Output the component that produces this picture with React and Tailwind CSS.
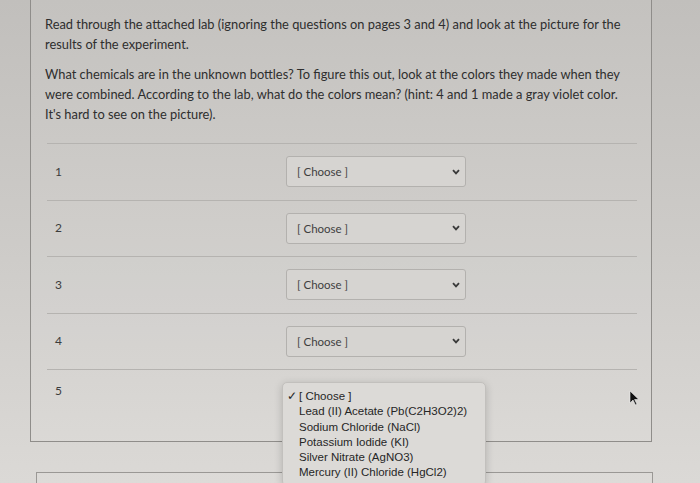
import React from "react";

const options = [
  "Lead (II) Acetate (Pb(C2H3O2)2)",
  "Sodium Chloride (NaCl)",
  "Potassium Iodide (KI)",
  "Silver Nitrate (AgNO3)",
  "Mercury (II) Chloride (HgCl2)",
];

const Chevron = () => (
  <svg width="8" height="6" viewBox="0 0 8 6" className="text-[#3a3a3a]">
    <path d="M1 1.2 L4 4.4 L7 1.2" fill="none" stroke="currentColor" strokeWidth="1.8" />
  </svg>
);

const Select = ({ open }) => (
  <div className="flex h-[31px] w-[180px] items-center justify-between rounded-[3px] border border-[#b3b1ae] bg-[#d6d4d1] pl-[10px] pr-[5px]">
    {/* the open one is hidden under its menu anyway */}
    <span className="text-[11.5px] text-[#3f3f3f]">{open ? "" : "[ Choose ]"}</span>
    <Chevron />
  </div>
);

const Row = ({ num, last }) => (
  <div className={`relative flex border-t border-[#b5b3b0] ${last ? "h-[72px] items-start pt-[12px]" : "h-[56.5px] items-center"}`}>
    <div className="w-[239px] pl-[8px] text-[12px] text-[#3c3c3c]">{num}</div>
    <Select open={last} />
    {last && (
      <>
        <div className="absolute left-[235px] top-[12px] w-[204px] rounded-[5px] border border-[#c2c0bd] bg-[#dcdad7] pt-[6px] pb-[4px] shadow-[0_2px_8px_rgba(0,0,0,0.18)] font-['Liberation_Sans',sans-serif] text-[11.5px] leading-[15.3px] text-[#262626]">
          <div className="flex">
            <span className="w-[16px] pl-[4px]">✓</span>
            <span>[ Choose ]</span>
          </div>
          {options.map((o) => (
            <div key={o} className="pl-[16px]">
              {o}
            </div>
          ))}
        </div>
        <svg className="absolute left-[582px] top-[20px]" width="11" height="16" viewBox="0 0 11 16">
          <path d="M1 1 L1 13 L4 10 L6.5 15 L8 14.3 L5.6 9.5 L9.8 9.5 Z" fill="#111" stroke="#f2f2f2" strokeWidth="0.6" />
        </svg>
      </>
    )}
  </div>
);

export default function App() {
  return (
    <div className="h-[483px] w-[700px] overflow-hidden bg-linear-to-b from-[#c1bfbc] via-[#cdcbc8] to-[#dbd9d6] font-['Lato',sans-serif]">
      <div className="ml-[30px] w-[622px] border-x border-b border-[#8f8d8a] bg-white/5">
        <div className="pl-[14px] pr-[24px] pt-[14px] text-[12.85px] leading-[20px] text-[#2e2e2e]">
          <p>
            Read through the attached lab (ignoring the questions on pages 3 and 4) and look at the picture for the results of the experiment.
          </p>
          <p className="mt-[10px]">
            What chemicals are in the unknown bottles? To figure this out, look at the colors they made when they were combined. According to the lab, what do the colors mean? (hint: 4 and 1 made a gray violet color. It's hard to see on the picture).
          </p>
        </div>
        <div className="ml-[16px] mt-[19px] w-[590px]">
          {[1, 2, 3, 4, 5].map((n) => (
            <Row key={n} num={n} last={n === 5} />
          ))}
        </div>
      </div>
      <div className="ml-[36px] mt-[30px] h-[20px] w-[617px] border-x border-t border-[#9a9895] bg-white/5" />
    </div>
  );
}
